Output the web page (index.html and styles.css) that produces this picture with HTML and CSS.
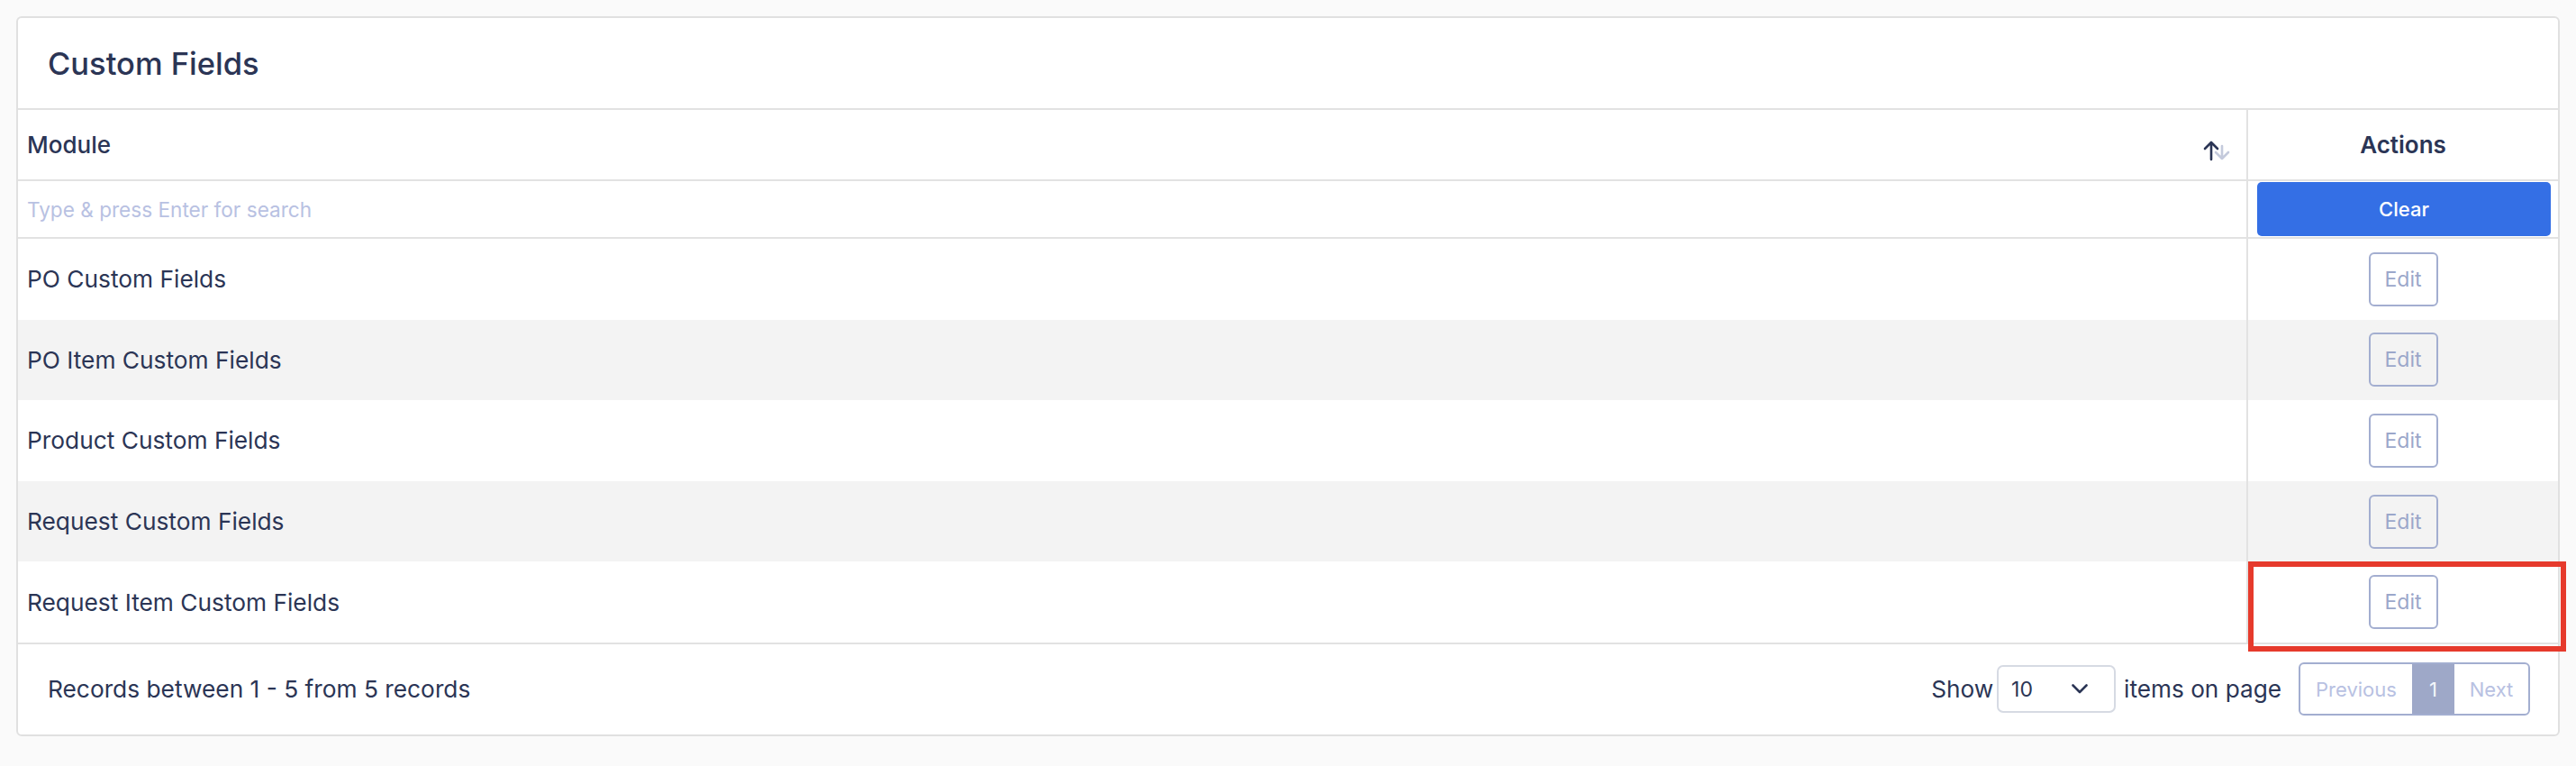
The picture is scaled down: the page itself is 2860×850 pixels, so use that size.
FILE: index.html
```html
<!DOCTYPE html>
<html lang="en">
<head>
<meta charset="utf-8">
<title>Custom Fields</title>
<link rel="stylesheet" href="styles.css">
</head>
<body>
<div class="card">
  <div class="card-header"><h2 class="card-title">Custom Fields</h2></div>

  <div class="row head-row">
    <div class="cell cell-module head-module">
      <span>Module</span>
      <svg class="sort-icon" width="32" height="24" viewBox="0 0 32 24" aria-hidden="true">
        <path d="M11 22V3M4 10L11 3L18 10" fill="none" stroke="#2b3555" stroke-width="2.6" stroke-linecap="round" stroke-linejoin="round"/>
        <path d="M23 7V21M16 14L23 21L30 14" fill="none" stroke="#c4cadc" stroke-width="2.6" stroke-linecap="round" stroke-linejoin="round"/>
      </svg>
    </div>
    <div class="cell cell-actions head-actions">Actions</div>
  </div>

  <div class="row filter-row">
    <div class="cell cell-module"><input class="search" type="text" placeholder="Type &amp; press Enter for search"></div>
    <div class="cell cell-actions filter-actions"><button class="btn-clear">Clear</button></div>
  </div>

  <div class="row data-row"><div class="cell cell-module">PO Custom Fields</div><div class="cell cell-actions"><button class="btn-edit">Edit</button></div></div>
  <div class="row data-row alt"><div class="cell cell-module">PO Item Custom Fields</div><div class="cell cell-actions"><button class="btn-edit">Edit</button></div></div>
  <div class="row data-row"><div class="cell cell-module">Product Custom Fields</div><div class="cell cell-actions"><button class="btn-edit">Edit</button></div></div>
  <div class="row data-row alt"><div class="cell cell-module">Request Custom Fields</div><div class="cell cell-actions"><button class="btn-edit">Edit</button></div></div>
  <div class="row data-row"><div class="cell cell-module">Request Item Custom Fields</div><div class="cell cell-actions"><button class="btn-edit">Edit</button></div></div>

  <div class="card-footer">
    <div class="records">Records between 1 - 5 from 5 records</div>
    <div class="paging">
      <span class="show-label">Show</span>
      <div class="page-size">
        <span>10</span>
        <svg width="18" height="11" viewBox="0 0 18 11" aria-hidden="true"><path d="M1.5 1.5L9 9L16.5 1.5" fill="none" stroke="#2b3555" stroke-width="2.6" stroke-linecap="round" stroke-linejoin="round"/></svg>
      </div>
      <span class="items-label">items on page</span>
      <div class="pager">
        <span class="pg pg-prev">Previous</span>
        <span class="pg pg-current">1</span>
        <span class="pg pg-next">Next</span>
      </div>
    </div>
  </div>

  <div class="highlight"></div>
</div>
</body>
</html>
```

FILE: styles.css
```css
* { box-sizing: border-box; }

html, body {
  margin: 0;
  padding: 0;
  background: #fafafa;
}

body {
  padding: 18px;
  font-family: "Inter", "Noto Sans", sans-serif;
  color: #2b3555;
}

.card {
  position: relative;
  background: #ffffff;
  border: 2px solid #e0e0e0;
  border-radius: 6px;
  width: 2824px;
}

.card-header {
  height: 102px;
  border-bottom: 2px solid #e2e2e2;
  display: flex;
  align-items: center;
  padding-left: 33px;
}

.card-title {
  margin: 0;
  font-size: 34.5px;
  font-weight: 500;
  color: #2b3555;
}

.row {
  display: grid;
  grid-template-columns: 1fr 346px;
}

.cell {
  display: flex;
  align-items: center;
}

.cell-module {
  padding-left: 10px;
}

.cell-actions {
  border-left: 2px solid #e2e2e2;
  justify-content: center;
}

.head-row {
  height: 79px;
  border-bottom: 2px solid #e2e2e2;
}

.head-module {
  justify-content: space-between;
  padding-right: 18px;
  font-size: 26px;
  font-weight: 500;
}

.sort-icon {
  margin-top: 13px;
}

.head-actions {
  font-size: 26px;
  font-weight: 600;
}

.filter-row {
  height: 64px;
  border-bottom: 2px solid #e2e2e2;
}

.search {
  border: none;
  outline: none;
  background: transparent;
  padding: 0;
  width: 100%;
  font-family: "Inter", "Noto Sans", sans-serif;
  font-size: 22.6px;
  color: #2b3555;
}

.search::placeholder {
  color: #b8c1e2;
}

.filter-actions {
  padding: 0 8px 0 10px;
}

.btn-clear {
  width: 100%;
  height: 60px;
  border: none;
  border-radius: 5px;
  background: #346fe5;
  color: #ffffff;
  font-family: "Inter", "Noto Sans", sans-serif;
  font-size: 22px;
  font-weight: 500;
}

.data-row {
  height: 89.6px;
  font-size: 26.3px;
}

.data-row.alt {
  background: #f3f3f3;
}

.btn-edit {
  width: 77px;
  height: 60px;
  border: 2px solid #a3aed0;
  border-radius: 6px;
  background: transparent;
  color: #9ba7ca;
  font-family: "Inter", "Noto Sans", sans-serif;
  font-size: 23px;
  padding: 0;
}

.card-footer {
  height: 102px;
  border-top: 2px solid #e2e2e2;
  display: flex;
  align-items: center;
  justify-content: space-between;
  padding: 0 31px 0 33px;
  font-size: 26.3px;
}

.paging {
  display: flex;
  align-items: center;
  font-size: 26.2px;
}

.page-size {
  margin-left: 4px;
  width: 132px;
  height: 53px;
  border: 2px solid #d6dae3;
  border-radius: 7px;
  display: flex;
  align-items: center;
  justify-content: space-between;
  padding: 0 29px 0 14px;
  font-size: 23px;
}

.items-label {
  margin-left: 9px;
}

.pager {
  margin-left: 19px;
  display: flex;
  height: 59px;
  border: 2px solid #a3aed0;
  border-radius: 6px;
  overflow: hidden;
  font-size: 22px;
}

.pg {
  display: flex;
  align-items: center;
  justify-content: center;
  color: #b8c1e2;
}

.pg-prev { width: 124px; }

.pg-current {
  width: 47px;
  background: #9ea8c8;
  color: #f4f6fb;
}

.pg-next { width: 82px; }

.highlight {
  position: absolute;
  left: 2476px;
  top: 603px;
  width: 353px;
  height: 100px;
  border: 6px solid #e63a2c;
  pointer-events: none;
}
```
